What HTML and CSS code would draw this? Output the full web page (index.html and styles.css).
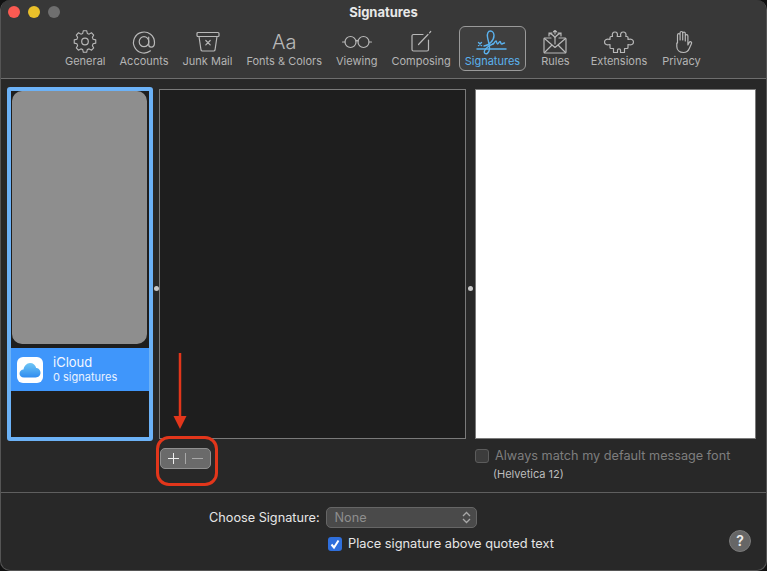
FILE: index.html
```html
<!DOCTYPE html>
<html lang="en">
<head>
    <meta charset="UTF-8">
    <meta name="viewport" content="width=device-width, initial-scale=1.0">
    <title>Signatures</title>
    <link rel="stylesheet" href="styles.css">
</head>
<body>
<div class="window">

    <header class="titlebar">
        <div class="lights">
            <span class="light red"></span>
            <span class="light yellow"></span>
            <span class="light grey"></span>
        </div>
        <div class="title">Signatures</div>
        <nav class="toolbar">
            <div class="tool">
                <svg class="icon" width="24" height="24" viewBox="0 0 24 24">
                    <path d="M10.200 2h3.600l.7 2.900 2 .8 2.500-1.500 2.500 2.500-1.500 2.500.8 2 2.900.7v3.600l-2.900.7-.8 2 1.500 2.500-2.500 2.500-2.500-1.500-2 .8-.7 2.900h-3.600l-.7-2.900-2-.8-2.500 1.500-2.500-2.500 1.500-2.500-.8-2-2.900-.7v-3.600l2.900-.7.8-2-1.500-2.500 2.500-2.500 2.500 1.500 2-.8z" transform="translate(.96 -1.100) scale(.92)"/>
                    <circle cx="12" cy="11.500" r="3.300"/>
                </svg>
                <span>General</span>
            </div>
            <div class="tool">
                <svg class="icon" width="24" height="24" viewBox="0 0 24 24">
                    <path d="M18.500 20.800a10.500 10.500 0 1 1 4-8.300c0 3-1.300 4.700-3.300 4.700-1.500 0-2.500-1-2.500-2.700V7"/>
                    <ellipse cx="12" cy="11.700" rx="4.800" ry="5"/>
                </svg>
                <span>Accounts</span>
            </div>
            <div class="tool">
                <svg class="icon" width="24" height="24" viewBox="0 0 24 24">
                    <rect x="1" y="2.500" width="22" height="4" rx="1"/>
                    <path d="M3 6.500l2 13.500a1.500 1.500 0 0 0 1.500 1h11a1.500 1.500 0 0 0 1.500-1l2-13.500"/>
                    <path d="M9.800 10.500l4.400 4.400M14.200 10.500l-4.400 4.400"/>
                </svg>
                <span>Junk Mail</span>
            </div>
            <div class="tool">
                <div class="aa">Aa</div>
                <span>Fonts &amp; Colors</span>
            </div>
            <div class="tool">
                <svg class="icon" width="32" height="24" viewBox="0 0 32 24">
                    <circle cx="9.500" cy="12" r="5.500"/>
                    <circle cx="22.500" cy="12" r="5.500"/>
                    <path d="M15 11q1-1 2 0M4 12H1.500M28 12h2.500"/>
                </svg>
                <span>Viewing</span>
            </div>
            <div class="tool">
                <svg class="icon" width="24" height="24" viewBox="0 0 24 24">
                    <path d="M19.500 10v9.500a1.500 1.500 0 0 1-1.500 1.500H4.500A1.500 1.500 0 0 1 3 19.500V6a1.500 1.500 0 0 1 1.500-1.500H14"/>
                    <path d="M9.500 14.500L19 4.500M20.500 2.800l1.200-1.300"/>
                </svg>
                <span>Composing</span>
            </div>
            <div class="tool selected">
                <svg class="icon" width="32" height="24" viewBox="0 0 32 24">
                    <path d="M1 19h29" stroke-width="1.500"/>
                    <path d="M2.500 12.500l3 3M5.500 12.500l-3 3"/>
                    <path d="M8 16C12 16 18 11 18 5.500 18 3 16.500 1 14.500 1 12 1 11 3.500 11.500 7 12 11 14 15 13.500 19 13 23 10.500 24.500 9 23.500 7 22 10 16 17 14"/>
                    <path d="M17 14c1.500-.5 2-3 3-3s.5 3 1.500 3 1.500-2.500 2.500-2.500.5 2.500 1.500 2.500 1.500-1 3-1"/>
                </svg>
                <span>Signatures</span>
            </div>
            <div class="tool rules">
                <svg class="icon" width="24" height="24" viewBox="0 0 24 24">
                    <path d="M8 8H2a1 1 0 0 0-1 1v13a1 1 0 0 0 1 1h20a1 1 0 0 0 1-1V9a1 1 0 0 0-1-1h-6"/>
                    <path d="M1.500 8.500L12 17.500l10.500-9M1.500 22.500L9 15M22.500 22.500L15 15"/>
                    <path d="M12 14V7M12 8C11.500 5.500 9 4.500 6 3M12 8C12.500 5.500 15 4.500 18 3M6 6V3h3M18 6V3h-3M10.500 1.800L12 .5l1.500 1.300M12 .5V4"/>
                </svg>
                <span>Rules</span>
            </div>
            <div class="tool">
                <svg class="icon" width="30" height="24" viewBox="0 0 30 24">
                    <g transform="translate(0 1.500)">
                        <path d="M7 5h1.500c-.8-3 .5-4.500 2.500-4.500s3 1.500 2.200 4.500h3.600c-.8-3 .5-4.500 2.500-4.500s3.300 1.500 2.500 4.500H23a1 1 0 0 1 1 1v2c3-1 5.500 0 5.500 2.500s-2.500 3.500-5.500 2.500v3a1 1 0 0 1-1 1h-2.500V21h-4v-2.500c0-1.500-3-1.500-3 0V21h-4v-4H7a1 1 0 0 1-1-1v-3c-3 1-5.500 0-5.500-2.500S3 7 6 8V6a1 1 0 0 1 1-1z"/>
                    </g>
                </svg>
                <span>Extensions</span>
            </div>
            <div class="tool privacy">
                <svg class="icon" width="24" height="24" viewBox="0 0 24 24">
                    <path d="M7.500 13V5a1.300 1.300 0 0 1 2.600 0v5M10.100 10V2.800a1.300 1.300 0 0 1 2.600 0V10M12.700 10V3.500a1.300 1.300 0 0 1 2.600 0V11M15.300 11V6a1.300 1.300 0 0 1 2.600 0v9l1.300-2.500c.8-1.500 3-.6 2.300 1l-2.200 5c-1 2.500-3 4-5.800 4-4 0-6.700-2.500-6.700-6V13"/>
                </svg>
                <span>Privacy</span>
            </div>
        </nav>
    </header>

    <main class="panes">
        <section class="accounts">
            <div class="all-box"></div>
            <div class="account-row">
                <div class="cloud-tile">
                    <svg width="22" height="16" viewBox="0 0 22 16">
                        <defs>
                            <linearGradient id="cloud" x1="0" y1="0" x2="0" y2="1">
                                <stop offset="0" stop-color="#6fc6f5"/>
                                <stop offset="1" stop-color="#2f8cf0"/>
                            </linearGradient>
                        </defs>
                        <path fill="url(#cloud)" d="M5 15.500C2 15.500 .5 13.500 .5 11.500c0-2.300 1.800-4 4-4C5 4 7.800 1 11 1c3.300 0 5.500 2 6.200 5 2.500 0 4.300 2.300 4.300 4.800 0 2.600-2 4.700-4.800 4.700z"/>
                    </svg>
                </div>
                <div class="account-text">
                    <div class="account-name">iCloud</div>
                    <div class="account-count">0 signatures</div>
                </div>
            </div>
        </section>
        <div class="splitter"><span class="dot"></span></div>
        <section class="middle-col">
            <div class="sig-list"></div>
            <div class="plus-minus">
                <span class="pm-sign plus"></span>
                <span class="pm-sep"></span>
                <span class="pm-sign minus"></span>
            </div>
        </section>
        <div class="splitter wide"><span class="dot"></span></div>
        <section class="right-col">
            <div class="sig-edit"></div>
            <label class="match-font">
                <span class="box-off"></span>
                <span>Always match my default message font</span>
            </label>
            <div class="font-note">(Helvetica 12)</div>
        </section>
    </main>

    <footer class="bottom">
        <div class="choose-row">
            <span class="choose-label">Choose Signature:</span>
            <div class="select">
                <span>None</span>
                <svg width="9" height="13" viewBox="0 0 9 13">
                    <path d="M1 5l3.500-3.500L8 5M1 8l3.500 3.500L8 8"/>
                </svg>
            </div>
        </div>
        <label class="place-row">
            <span class="box-on">
                <svg width="12" height="12" viewBox="0 0 12 12"><path d="M2.500 6.500l2.500 3 4.500-7"/></svg>
            </span>
            <span>Place signature above quoted text</span>
        </label>
        <div class="help">?</div>
    </footer>

    <!-- red markup on top of the screenshot -->
    <svg class="arrow" width="14" height="76" viewBox="0 0 14 76">
        <path d="M7 0V64" stroke="#e2361b" stroke-width="2.500" fill="none"/>
        <path d="M.5 63h13L7 76z" fill="#e2361b"/>
    </svg>
    <div class="callout"></div>
</div>
</body>
</html>
```

FILE: styles.css
```css
* {
    box-sizing: border-box;
}

html, body {
    margin: 0;
    height: 100%;
    background: #111;
}

body {
    font-family: Inter, "Noto Sans", sans-serif;
    color: #e6e6e6;
    overflow: hidden;
}

.window {
    position: relative;
    width: 767px;
    height: 571px;
    background: #282828;
    border-radius: 10px;
    border: 1px solid #555;
    border-top: none;
    overflow: hidden;
    display: flex;
    flex-direction: column;
}

/* title bar and toolbar */
.titlebar {
    height: 79px;
    background: #383838;
    border-bottom: 1px solid #6e6e6e;
    padding-top: 5px;
    position: relative;
}

.lights {
    position: absolute;
    left: 7px;
    top: 6px;
    display: flex;
    gap: 8px;
}

.light {
    width: 12px;
    height: 12px;
    border-radius: 50%;
}

.red { background: #fb5a52; }
.yellow { background: #e9c02a; }
.grey { background: #6f6f6f; }

.title {
    text-align: center;
    font-size: 13px;
    font-weight: 700;
    line-height: 14px;
    color: #e8e8e8;
}

.toolbar {
    display: flex;
    margin-top: 7px;
    padding-left: 57px;
}

.tool {
    height: 45px;
    padding: 3px 6px 0;
    border: 1px solid transparent;
    border-radius: 6px;
    display: flex;
    flex-direction: column;
    align-items: center;
    justify-content: space-between;
    font-size: 11px;
    line-height: 14px;
    color: #b4b4b4;
    white-space: nowrap;
}

.tool span {
    margin-bottom: 5px;
}

.rules {
    padding: 3px 13px 0 14px;
}

.privacy {
    margin-left: 1px;
}

.icon {
    flex: none;
    overflow: visible;
    fill: none;
    stroke: #b8b8b8;
    stroke-width: 1.200;
    stroke-linecap: round;
    stroke-linejoin: round;
}

.aa {
    font-size: 20px;
    line-height: 24px;
    font-weight: 300;
    color: #b8b8b8;
}

.selected {
    margin-left: 1px;
    padding: 3px 5px 0;
    background: #3f3f3f;
    border-color: #9a9a9a;
    color: #5bb2ee;
}

.selected .icon {
    stroke: #5bb2ee;
    stroke-width: 1.400;
}

/* three panes */
.panes {
    height: 414px;
    padding: 8px 10px 0 6px;
    display: flex;
    border-bottom: 1px solid #5f5f5f;
}

.accounts {
    width: 146px;
    height: 354px;
    border: 4px solid #6cb2f7;
    border-radius: 3px;
    background: #1e1e1e;
}

.all-box {
    width: 135px;
    height: 253px;
    margin-left: 1px;
    background: #8e8e8e;
    border-radius: 10px;
}

.account-row {
    margin-top: 4px;
    height: 43px;
    background: #3f96fb;
    display: flex;
    align-items: center;
    padding-left: 6px;
    gap: 10px;
}

.cloud-tile {
    width: 26px;
    height: 26px;
    border-radius: 6px;
    background: #fff;
    display: flex;
    align-items: center;
    justify-content: center;
}

.account-name {
    font-size: 13px;
    line-height: 16px;
    color: #f4f8ff;
}

.account-count {
    font-size: 11px;
    line-height: 15px;
    color: #eaf2ff;
}

.splitter {
    width: 6px;
    height: 402px;
    display: flex;
    align-items: center;
    justify-content: center;
}

.splitter.wide {
    width: 9px;
}

.dot {
    width: 5px;
    height: 5px;
    flex: none;
    border-radius: 50%;
    background: #c8c8c8;
}

.middle-col {
    width: 307px;
    padding-top: 2px;
}

.sig-list {
    height: 350px;
    background: #1e1e1e;
    border: 1px solid #7a7a7a;
}

.plus-minus {
    width: 51px;
    height: 21px;
    margin: 9px 0 0 1px;
    background: #6a6a6a;
    border: 1px solid #909090;
    border-radius: 5px;
    display: flex;
    align-items: center;
    justify-content: space-between;
    padding: 0 7px;
}

.pm-sign {
    position: relative;
    width: 11px;
    height: 11px;
}

.pm-sign::before {
    content: "";
    position: absolute;
    left: 0;
    top: 4.500px;
    width: 11px;
    height: 1.500px;
    background: #eee;
}

.plus::after {
    content: "";
    position: absolute;
    left: 4.500px;
    top: 0;
    width: 1.500px;
    height: 11px;
    background: #eee;
}

.minus::before {
    height: 1px;
    background: #a8a8a8;
}

.pm-sep {
    width: 1px;
    height: 11px;
    background: #a8a8a8;
}

.right-col {
    width: 281px;
    padding-top: 2px;
}

.sig-edit {
    height: 350px;
    background: #fff;
    border: 1px solid #7a7a7a;
}

.match-font {
    display: flex;
    align-items: center;
    gap: 6px;
    margin-top: 9px;
    font-size: 12.700px;
    line-height: 16px;
    color: #7e7e7e;
}

.box-off {
    width: 14px;
    height: 14px;
    background: #3c3c3c;
    border: 1px solid #5c5c5c;
    border-radius: 3px;
}

.font-note {
    margin: 3px 0 0 18px;
    font-size: 11px;
    line-height: 14px;
    color: #bdbdbd;
}

/* bottom bar */
.bottom {
    position: relative;
    flex: 1;
}

.choose-row {
    display: flex;
    align-items: center;
    margin: 14px 0 0 208px;
}

.choose-label {
    font-size: 12.700px;
    color: #e6e6e6;
    margin-right: 6px;
}

.select {
    width: 151px;
    height: 21px;
    background: #4a4a4a;
    border: 1px solid #666;
    border-radius: 5px;
    display: flex;
    align-items: center;
    justify-content: space-between;
    padding: 0 5px 0 8px;
    font-size: 12.700px;
    color: #8e8e8e;
}

.select svg {
    fill: none;
    stroke: #a8a8a8;
    stroke-width: 1.300;
}

.place-row {
    display: flex;
    align-items: center;
    gap: 6px;
    margin: 8px 0 0 327px;
    font-size: 12.800px;
    line-height: 16px;
    color: #e6e6e6;
}

.box-on {
    width: 14px;
    height: 14px;
    border-radius: 3px;
    background: #2f6fdc;
    display: flex;
    align-items: center;
    justify-content: center;
}

.box-on svg {
    fill: none;
    stroke: #fff;
    stroke-width: 2;
}

.help {
    position: absolute;
    right: 15px;
    top: 37px;
    width: 22px;
    height: 22px;
    border-radius: 50%;
    background: #666;
    border: 1px solid #7a7a7a;
    text-align: center;
    font-size: 14px;
    font-weight: 600;
    line-height: 20px;
    color: #eee;
}

/* annotation */
.arrow {
    position: absolute;
    left: 172px;
    top: 353px;
}

.callout {
    position: absolute;
    left: 155px;
    top: 436px;
    width: 62px;
    height: 50px;
    border: 3px solid #e2361b;
    border-radius: 13px;
}
```
